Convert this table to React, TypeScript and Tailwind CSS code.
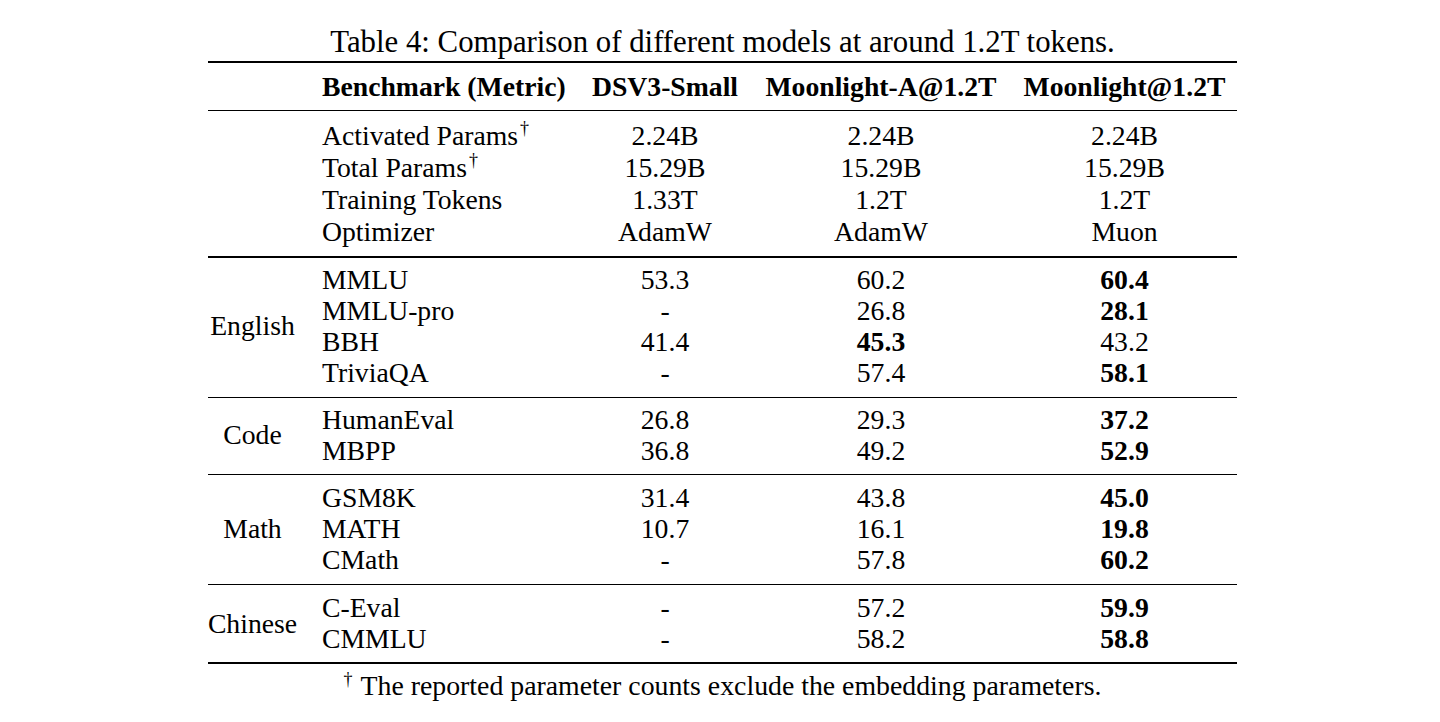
import React from "react";

type Cell = { v: string; b?: boolean };
type Row = { name: string; dag?: boolean; cells: Cell[] };
type Group = { label: string; rows: Row[]; mt: string; rowH: string; ruleMt: string; last?: boolean };

const Dag = () => (
  <span className="relative top-[-11px] ml-[2px] text-[18px] leading-none">†</span>
);

const groups: Group[] = [
  {
    label: "",
    mt: "mt-[9px]",
    rowH: "h-[32px] leading-[32px]",
    ruleMt: "mt-[8px]",
    rows: [
      { name: "Activated Params", dag: true, cells: [{ v: "2.24B" }, { v: "2.24B" }, { v: "2.24B" }] },
      { name: "Total Params", dag: true, cells: [{ v: "15.29B" }, { v: "15.29B" }, { v: "15.29B" }] },
      { name: "Training Tokens", cells: [{ v: "1.33T" }, { v: "1.2T" }, { v: "1.2T" }] },
      { name: "Optimizer", cells: [{ v: "AdamW" }, { v: "AdamW" }, { v: "Muon" }] },
    ],
  },
  {
    label: "English",
    mt: "mt-[6px]",
    rowH: "h-[31px] leading-[31px]",
    ruleMt: "mt-[9px]",
    rows: [
      { name: "MMLU", cells: [{ v: "53.3" }, { v: "60.2" }, { v: "60.4", b: true }] },
      { name: "MMLU-pro", cells: [{ v: "-" }, { v: "26.8" }, { v: "28.1", b: true }] },
      { name: "BBH", cells: [{ v: "41.4" }, { v: "45.3", b: true }, { v: "43.2" }] },
      { name: "TriviaQA", cells: [{ v: "-" }, { v: "57.4" }, { v: "58.1", b: true }] },
    ],
  },
  {
    label: "Code",
    mt: "mt-[6px]",
    rowH: "h-[31px] leading-[31px]",
    ruleMt: "mt-[8px]",
    rows: [
      { name: "HumanEval", cells: [{ v: "26.8" }, { v: "29.3" }, { v: "37.2", b: true }] },
      { name: "MBPP", cells: [{ v: "36.8" }, { v: "49.2" }, { v: "52.9", b: true }] },
    ],
  },
  {
    label: "Math",
    mt: "mt-[7px]",
    rowH: "h-[31px] leading-[31px]",
    ruleMt: "mt-[9px]",
    rows: [
      { name: "GSM8K", cells: [{ v: "31.4" }, { v: "43.8" }, { v: "45.0", b: true }] },
      { name: "MATH", cells: [{ v: "10.7" }, { v: "16.1" }, { v: "19.8", b: true }] },
      { name: "CMath", cells: [{ v: "-" }, { v: "57.8" }, { v: "60.2", b: true }] },
    ],
  },
  {
    label: "Chinese",
    mt: "mt-[7px]",
    rowH: "h-[31px] leading-[31px]",
    ruleMt: "mt-[8px]",
    last: true,
    rows: [
      { name: "C-Eval", cells: [{ v: "-" }, { v: "57.2" }, { v: "59.9", b: true }] },
      { name: "CMMLU", cells: [{ v: "-" }, { v: "58.2" }, { v: "58.8", b: true }] },
    ],
  },
];

const colW = ["w-[170px]", "w-[262px]", "w-[225px]"];

export default function App() {
  return (
    <div
      className="min-h-[722px] w-[1440px] bg-white text-black"
      style={{ fontFamily: '"Liberation Serif", "Times New Roman", serif' }}
    >
      <div className="ml-[208px] w-[1029px] pt-[24px]">
        <div className="h-[36px] whitespace-nowrap text-center text-[30.8px] leading-[36px]">
          Table 4: Comparison of different models at around 1.2T tokens.
        </div>
        <div className="mt-[1px] h-[2px] bg-black" />
        <div className="mt-[8px] flex h-[31px] text-[27.7px] font-bold leading-[31px]">
          <div className="w-[114px]" />
          <div className="w-[258px] whitespace-nowrap">Benchmark (Metric)</div>
          <div className="w-[170px] whitespace-nowrap text-center">DSV3-Small</div>
          <div className="w-[262px] whitespace-nowrap text-center">Moonlight-A@1.2T</div>
          <div className="w-[225px] whitespace-nowrap text-center">Moonlight@1.2T</div>
        </div>
        <div className="mt-[8px] h-[1.3px] bg-black" />
        {groups.map((g, gi) => (
          <div key={gi}>
            <div className={`${g.mt} flex text-[27.7px]`}>
              <div className="flex w-[114px] items-center justify-center pr-[25px] leading-[31px]">
                {g.label}
              </div>
              <div className="flex flex-col">
                {g.rows.map((r, ri) => (
                  <div key={ri} className={`flex ${g.rowH}`}>
                    <div className="w-[258px] whitespace-nowrap">
                      {r.name}
                      {r.dag && <Dag />}
                    </div>
                    {r.cells.map((c, ci) => (
                      <div
                        key={ci}
                        className={`${colW[ci]} whitespace-nowrap text-center ${c.b ? "font-bold" : ""}`}
                      >
                        {c.v}
                      </div>
                    ))}
                  </div>
                ))}
              </div>
            </div>
            <div className={`${g.ruleMt} ${g.last ? "h-[2px]" : "h-[1.3px]"} bg-black`} />
          </div>
        ))}
        <div className="mt-[6px] h-[31px] whitespace-nowrap text-center text-[27.8px] leading-[31px]">
          <span className="relative top-[-10px] mr-[8px] text-[18px] leading-none">†</span>
          The reported parameter counts exclude the embedding parameters.
        </div>
      </div>
    </div>
  );
}
